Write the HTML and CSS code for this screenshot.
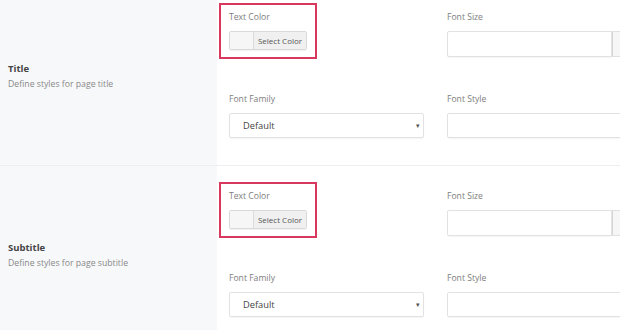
FILE: index.html
```html
<!DOCTYPE html>
<html>
<head>
<meta charset="utf-8">
<link rel="stylesheet" href="styles.css">
</head>
<body>
<div class="page">
  <section class="group first">
    <div class="side">
      <div class="side-title">Title</div>
      <div class="side-desc">Define styles for page title</div>
    </div>
    <div class="fields">
      <div class="field highlight">
        <label class="lbl">Text Color</label>
        <div class="picker"><span class="swatch"></span><span class="pick-text">Select Color</span></div>
      </div>
      <div class="field">
        <label class="lbl">Font Size</label>
        <div class="input-group"><div class="input"></div><div class="addon"></div></div>
      </div>
      <div class="field">
        <label class="lbl">Font Family</label>
        <div class="select"><span>Default</span><span class="arrow">&#9662;</span></div>
      </div>
      <div class="field">
        <label class="lbl">Font Style</label>
        <div class="input tall"></div>
      </div>
    </div>
  </section>
  <section class="group">
    <div class="side">
      <div class="side-title">Subtitle</div>
      <div class="side-desc">Define styles for page subtitle</div>
    </div>
    <div class="fields">
      <div class="field highlight">
        <label class="lbl">Text Color</label>
        <div class="picker"><span class="swatch"></span><span class="pick-text">Select Color</span></div>
      </div>
      <div class="field">
        <label class="lbl">Font Size</label>
        <div class="input-group"><div class="input"></div><div class="addon"></div></div>
      </div>
      <div class="field">
        <label class="lbl">Font Family</label>
        <div class="select"><span>Default</span><span class="arrow">&#9662;</span></div>
      </div>
      <div class="field">
        <label class="lbl">Font Style</label>
        <div class="input tall"></div>
      </div>
    </div>
  </section>
</div>
</body>
</html>
```
FILE: styles.css
```css
html, body {
  margin: 0;
  padding: 0;
  background: #fff;
  overflow: hidden;
}
body {
  font-family: "Open Sans", "Noto Sans", sans-serif;
  color: #555;
}
.page {
  width: 100%;
  overflow: hidden;
}
.group {
  display: flex;
  border-bottom: 1px solid #eceef1;
}
.group.first {
  margin-top: -13px;
}
.side {
  width: 217px;
  flex: none;
  background: #f7f8fa;
  display: flex;
  flex-direction: column;
  justify-content: center;
  padding-left: 8px;
  box-sizing: border-box;
}
.side-title {
  font-size: 9.5px;
  font-weight: 700;
  color: #444;
  line-height: 14px;
}
.side-desc {
  font-size: 8.7px;
  color: #888;
  line-height: 14px;
  margin-top: 1px;
}
.fields {
  flex: 1;
  min-width: 0;
  overflow: hidden;
  display: grid;
  grid-template-columns: 195px 195px;
  column-gap: 23px;
  row-gap: 36px;
  padding: 24px 0 27px 12px;
}
.field {
  display: flex;
  flex-direction: column;
  align-items: flex-start;
}
.lbl {
  font-size: 8.6px;
  line-height: 12px;
  color: #7d7d7d;
  margin-bottom: 8px;
}
.highlight {
  position: relative;
}
.highlight::before {
  content: "";
  position: absolute;
  top: -8px;
  left: -10px;
  width: 98px;
  height: 56px;
  border: 2px solid #d9385e;
  box-sizing: border-box;
}
.picker {
  display: flex;
  width: 78px;
  height: 19px;
  border: 1px solid #d9d9d9;
  border-radius: 2px;
  box-sizing: border-box;
  box-shadow: 0 1px 1px rgba(0,0,0,0.06);
  overflow: hidden;
}
.swatch {
  width: 23px;
  background: #f6f6f6;
  border-right: 1px solid #dcdcdc;
}
.pick-text {
  flex: 1;
  background: #f0f0f0;
  font-size: 8px;
  line-height: 17px;
  color: #555;
  text-align: center;
}
.input-group {
  display: flex;
  width: 195px;
  height: 26px;
}
.input {
  flex: 1;
  height: 26px;
  border: 1px solid #e2e2e2;
  border-radius: 2px;
  box-sizing: border-box;
  box-shadow: 0 1px 1px rgba(0,0,0,0.04);
  background: #fff;
}
.input.tall {
  flex: none;
  width: 195px;
  height: 25px;
}
.input-group .input {
  border-radius: 2px 0 0 2px;
}
.addon {
  width: 30px;
  flex: none;
  height: 26px;
  border: 1px solid #e0e0e0;
  border-left-color: #d6d6d6;
  background: #f6f6f6;
  box-sizing: border-box;
}
.select {
  width: 195px;
  height: 25px;
  border: 1px solid #e2e2e2;
  border-radius: 2px;
  box-sizing: border-box;
  box-shadow: 0 1px 1px rgba(0,0,0,0.04);
  display: flex;
  align-items: center;
  justify-content: space-between;
  padding: 0 3px 0 13px;
  font-size: 9.3px;
  color: #444;
}
.arrow {
  font-size: 7px;
  color: #555;
}
```
